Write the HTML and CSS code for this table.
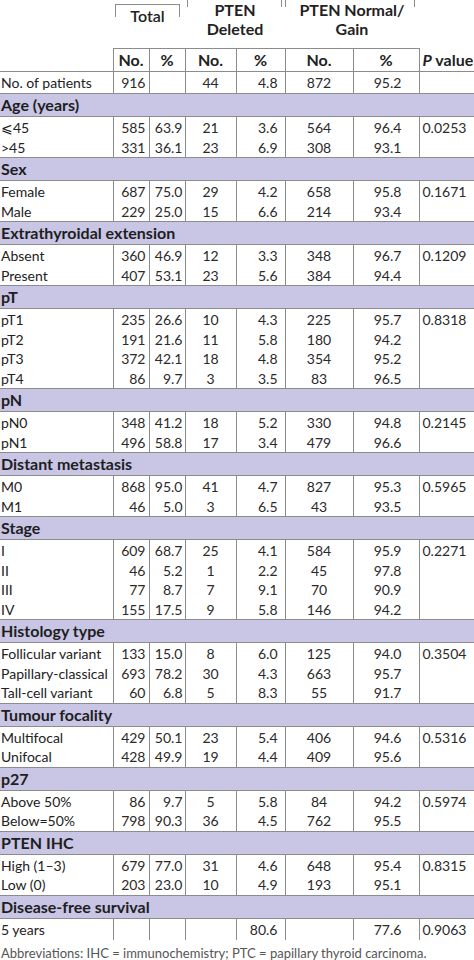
FILE: index.html
```html
<!DOCTYPE html>
<html>
<head>
<meta charset="utf-8">
<link rel="stylesheet" href="styles.css">
</head>
<body>
<table class="t">
<colgroup>
<col class="c1"><col class="c2"><col class="c3"><col class="c4"><col class="c5"><col class="c6"><col class="c7"><col class="c8">
</colgroup>
<thead>
<tr class="h1">
<th></th>
<th colspan="2" class="tot"><span class="totlab">Total</span></th>
<th colspan="2" class="grp gdel"><span class="glab">PTEN<br>Deleted</span></th>
<th colspan="2" class="grp gnor"><span class="glab">PTEN Normal/<br>Gain</span></th>
<th></th>
</tr>
<tr class="h2">
<th class="lab"></th>
<th class="b">No.</th><th class="b">%</th>
<th class="b">No.</th><th class="b">%</th>
<th class="b">No.</th><th class="b">%</th>
<th class="pv"><i>P</i> value</th>
</tr>
</thead>
<tbody>
<tr class="d solo">
<td class="lab">No. of patients</td><td class="n1">916</td><td class="p1"></td><td class="n2">44</td><td class="p2">4.8</td><td class="n3">872</td><td class="p3">95.2</td><td class="pv"></td>
</tr>
<tr class="band"><td colspan="8">Age (years)</td></tr>
<tr class="d first"><td class="lab">⩽45</td><td class="n1">585</td><td class="p1">63.9</td><td class="n2">21</td><td class="p2">3.6</td><td class="n3">564</td><td class="p3">96.4</td><td class="pv">0.0253</td></tr>
<tr class="d last"><td class="lab">&gt;45</td><td class="n1">331</td><td class="p1">36.1</td><td class="n2">23</td><td class="p2">6.9</td><td class="n3">308</td><td class="p3">93.1</td><td class="pv"></td></tr>
<tr class="band"><td colspan="8">Sex</td></tr>
<tr class="d first"><td class="lab">Female</td><td class="n1">687</td><td class="p1">75.0</td><td class="n2">29</td><td class="p2">4.2</td><td class="n3">658</td><td class="p3">95.8</td><td class="pv">0.1671</td></tr>
<tr class="d last"><td class="lab">Male</td><td class="n1">229</td><td class="p1">25.0</td><td class="n2">15</td><td class="p2">6.6</td><td class="n3">214</td><td class="p3">93.4</td><td class="pv"></td></tr>
<tr class="band"><td colspan="8">Extrathyroidal extension</td></tr>
<tr class="d first"><td class="lab">Absent</td><td class="n1">360</td><td class="p1">46.9</td><td class="n2">12</td><td class="p2">3.3</td><td class="n3">348</td><td class="p3">96.7</td><td class="pv">0.1209</td></tr>
<tr class="d last"><td class="lab">Present</td><td class="n1">407</td><td class="p1">53.1</td><td class="n2">23</td><td class="p2">5.6</td><td class="n3">384</td><td class="p3">94.4</td><td class="pv"></td></tr>
<tr class="band"><td colspan="8">pT</td></tr>
<tr class="d first"><td class="lab">pT1</td><td class="n1">235</td><td class="p1">26.6</td><td class="n2">10</td><td class="p2">4.3</td><td class="n3">225</td><td class="p3">95.7</td><td class="pv">0.8318</td></tr>
<tr class="d"><td class="lab">pT2</td><td class="n1">191</td><td class="p1">21.6</td><td class="n2">11</td><td class="p2">5.8</td><td class="n3">180</td><td class="p3">94.2</td><td class="pv"></td></tr>
<tr class="d"><td class="lab">pT3</td><td class="n1">372</td><td class="p1">42.1</td><td class="n2">18</td><td class="p2">4.8</td><td class="n3">354</td><td class="p3">95.2</td><td class="pv"></td></tr>
<tr class="d last"><td class="lab">pT4</td><td class="n1">86</td><td class="p1">9.7</td><td class="n2">3</td><td class="p2">3.5</td><td class="n3">83</td><td class="p3">96.5</td><td class="pv"></td></tr>
<tr class="band"><td colspan="8">pN</td></tr>
<tr class="d first"><td class="lab">pN0</td><td class="n1">348</td><td class="p1">41.2</td><td class="n2">18</td><td class="p2">5.2</td><td class="n3">330</td><td class="p3">94.8</td><td class="pv">0.2145</td></tr>
<tr class="d last"><td class="lab">pN1</td><td class="n1">496</td><td class="p1">58.8</td><td class="n2">17</td><td class="p2">3.4</td><td class="n3">479</td><td class="p3">96.6</td><td class="pv"></td></tr>
<tr class="band"><td colspan="8">Distant metastasis</td></tr>
<tr class="d first"><td class="lab">M0</td><td class="n1">868</td><td class="p1">95.0</td><td class="n2">41</td><td class="p2">4.7</td><td class="n3">827</td><td class="p3">95.3</td><td class="pv">0.5965</td></tr>
<tr class="d last"><td class="lab">M1</td><td class="n1">46</td><td class="p1">5.0</td><td class="n2">3</td><td class="p2">6.5</td><td class="n3">43</td><td class="p3">93.5</td><td class="pv"></td></tr>
<tr class="band"><td colspan="8">Stage</td></tr>
<tr class="d first"><td class="lab">I</td><td class="n1">609</td><td class="p1">68.7</td><td class="n2">25</td><td class="p2">4.1</td><td class="n3">584</td><td class="p3">95.9</td><td class="pv">0.2271</td></tr>
<tr class="d"><td class="lab">II</td><td class="n1">46</td><td class="p1">5.2</td><td class="n2">1</td><td class="p2">2.2</td><td class="n3">45</td><td class="p3">97.8</td><td class="pv"></td></tr>
<tr class="d"><td class="lab">III</td><td class="n1">77</td><td class="p1">8.7</td><td class="n2">7</td><td class="p2">9.1</td><td class="n3">70</td><td class="p3">90.9</td><td class="pv"></td></tr>
<tr class="d last"><td class="lab">IV</td><td class="n1">155</td><td class="p1">17.5</td><td class="n2">9</td><td class="p2">5.8</td><td class="n3">146</td><td class="p3">94.2</td><td class="pv"></td></tr>
<tr class="band"><td colspan="8">Histology type</td></tr>
<tr class="d first"><td class="lab">Follicular variant</td><td class="n1">133</td><td class="p1">15.0</td><td class="n2">8</td><td class="p2">6.0</td><td class="n3">125</td><td class="p3">94.0</td><td class="pv">0.3504</td></tr>
<tr class="d"><td class="lab">Papillary-classical</td><td class="n1">693</td><td class="p1">78.2</td><td class="n2">30</td><td class="p2">4.3</td><td class="n3">663</td><td class="p3">95.7</td><td class="pv"></td></tr>
<tr class="d last"><td class="lab">Tall-cell variant</td><td class="n1">60</td><td class="p1">6.8</td><td class="n2">5</td><td class="p2">8.3</td><td class="n3">55</td><td class="p3">91.7</td><td class="pv"></td></tr>
<tr class="band"><td colspan="8">Tumour focality</td></tr>
<tr class="d first"><td class="lab">Multifocal</td><td class="n1">429</td><td class="p1">50.1</td><td class="n2">23</td><td class="p2">5.4</td><td class="n3">406</td><td class="p3">94.6</td><td class="pv">0.5316</td></tr>
<tr class="d last"><td class="lab">Unifocal</td><td class="n1">428</td><td class="p1">49.9</td><td class="n2">19</td><td class="p2">4.4</td><td class="n3">409</td><td class="p3">95.6</td><td class="pv"></td></tr>
<tr class="band"><td colspan="8">p27</td></tr>
<tr class="d first"><td class="lab">Above 50%</td><td class="n1">86</td><td class="p1">9.7</td><td class="n2">5</td><td class="p2">5.8</td><td class="n3">84</td><td class="p3">94.2</td><td class="pv">0.5974</td></tr>
<tr class="d last"><td class="lab">Below=50%</td><td class="n1">798</td><td class="p1">90.3</td><td class="n2">36</td><td class="p2">4.5</td><td class="n3">762</td><td class="p3">95.5</td><td class="pv"></td></tr>
<tr class="band"><td colspan="8">PTEN IHC</td></tr>
<tr class="d first"><td class="lab">High (1–3)</td><td class="n1">679</td><td class="p1">77.0</td><td class="n2">31</td><td class="p2">4.6</td><td class="n3">648</td><td class="p3">95.4</td><td class="pv">0.8315</td></tr>
<tr class="d last"><td class="lab">Low (0)</td><td class="n1">203</td><td class="p1">23.0</td><td class="n2">10</td><td class="p2">4.9</td><td class="n3">193</td><td class="p3">95.1</td><td class="pv"></td></tr>
<tr class="band"><td colspan="8">Disease-free survival</td></tr>
<tr class="d solo"><td class="lab">5 years</td><td class="n1"></td><td class="p1"></td><td class="n2"></td><td class="p2">80.6</td><td class="n3"></td><td class="p3">77.6</td><td class="pv">0.9063</td></tr>
</tbody>
</table>
<p class="foot">Abbreviations: IHC = immunochemistry; PTC = papillary thyroid carcinoma.</p>
</body>
</html>
```
FILE: styles.css
```css
html, body {
  margin: 0;
  padding: 0;
  background: #ffffff;
}
body {
  font-family: Lato, "Open Sans", sans-serif;
  color: #222222;
  width: 474px;
  overflow: hidden;
}
.t {
  border-collapse: collapse;
  table-layout: fixed;
  width: 474px;
}
.c1 { width: 113px; }
.c2 { width: 36px; }
.c3 { width: 36px; }
.c4 { width: 51px; }
.c5 { width: 49px; }
.c6 { width: 68px; }
.c7 { width: 66px; }
.c8 { width: 55px; }

th, td {
  padding: 0;
  white-space: nowrap;
}

/* header row 1 */
.h1 th {
  height: 44px;
  vertical-align: top;
  font-size: 16px;
  font-weight: 700;
  line-height: 20px;
  text-align: center;
  position: relative;
}
.glab {
  display: block;
  margin-top: 0;
  line-height: 19px;
}
.h1 .grp::before,
.h1 .grp::after {
  content: "";
  position: absolute;
  top: 0;
  width: 1px;
  height: 7px;
  background: #8c8c8c;
}
.h1 .gdel::before { left: 2px; }
.h1 .gdel::after { right: 3px; }
.h1 .gnor::before { left: 0px; }
.h1 .gnor::after { right: 4px; }
.h1 .tot {
  padding-top: 4px;
}
.totlab {
  display: block;
  margin: 0 5px 0 2px;
  height: 12px;
  border: 1px solid #8c8c8c;
  border-bottom: none;
  line-height: 22px;
  font-weight: 600;
}

/* header row 2 */
.h2 th {
  height: 22px;
  font-size: 16px;
  font-weight: 700;
  line-height: 20px;
  text-align: center;
  border-bottom: 1px solid #8c8c8c;
}
.h2 th.b {
  border: 1px solid #8c8c8c;
}
.h2 th.pv {
  text-align: left;
  padding-left: 3px;
}

/* data rows */
.d td {
  font-size: 14px;
  line-height: 19.5px;
  color: #2a2a2a;
  border-left: 1px solid #8c8c8c;
}
.d td.lab {
  border-left: none;
  padding-left: 1px;
  text-align: left;
  color: #222;
}
.d td.n1 { text-align: right; padding-right: 3px; }
.d td.p1 { text-align: right; padding-right: 2px; }
.d td.n2 { text-align: center; }
.d td.p2 { text-align: right; padding-right: 7px; }
.d td.n3 { text-align: center; }
.d td.p3 { text-align: center; padding-left: 3px; }
.d td.pv { text-align: left; padding-left: 3px; }

.d.first td { padding-top: 1px; }
.d.solo td { line-height: 21px; }

/* bands */
.band td {
  background: #c8c5e5;
  font-size: 16px;
  font-weight: 700;
  line-height: 22px;
  padding-left: 1px;
  border-top: 1px solid #8c8c8c;
  border-bottom: 1px solid #8c8c8c;
  color: #1e1e1e;
}

.foot {
  margin: 6px 0 0 1px;
  font-size: 13px;
  color: #555555;
  line-height: 15px;
  white-space: nowrap;
}
```
